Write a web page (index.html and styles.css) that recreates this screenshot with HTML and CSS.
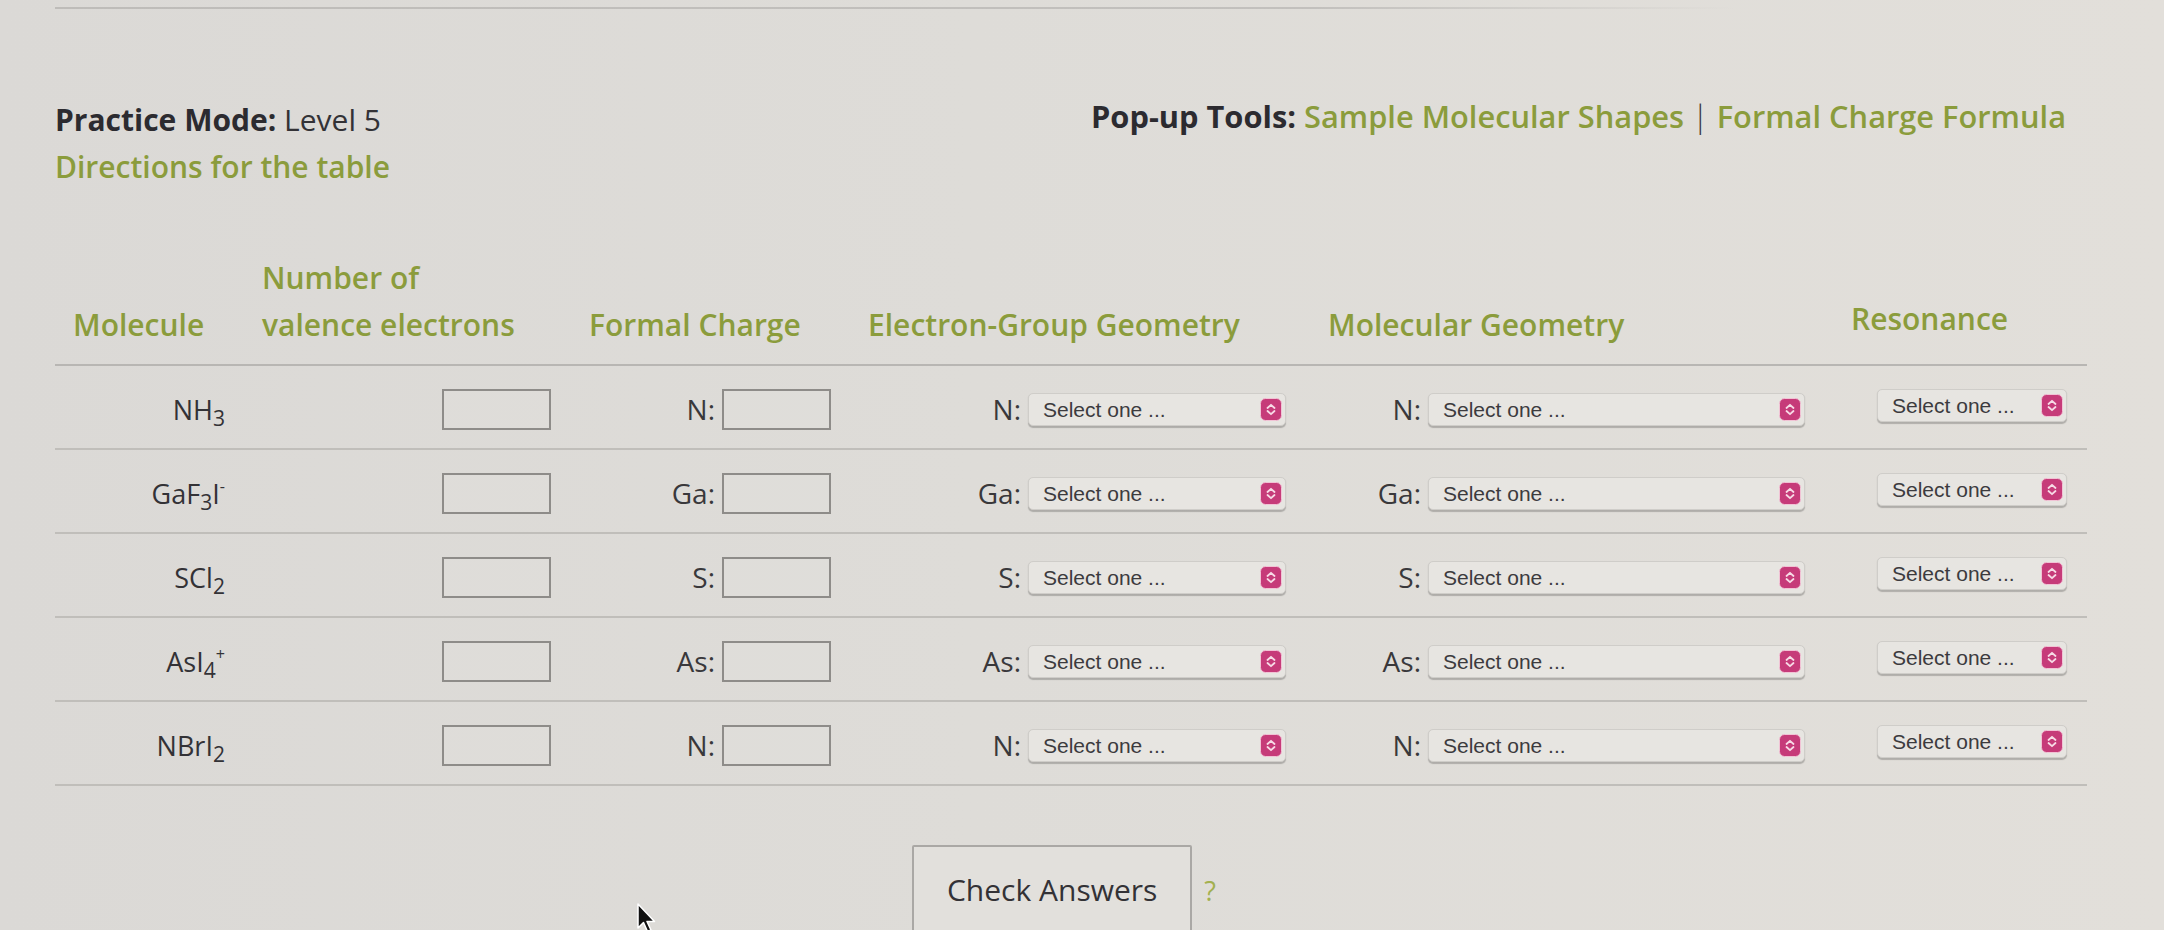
FILE: index.html
```html
<!DOCTYPE html>
<html lang="en">
<head>
<meta charset="utf-8">
<title>Practice Mode: Level 5</title>
<link rel="stylesheet" href="styles.css">
</head>
<body>
<div class="page">
  <div class="toprule"></div>

  <div class="intro">
    <div class="intro-left">
      <div class="mode"><b>Practice Mode:</b> Level 5</div>
      <a class="link strong">Directions for the table</a>
    </div>
    <div class="tools"><b>Pop-up Tools:</b> <a class="link">Sample Molecular Shapes</a> <span class="sep">|</span> <a class="link">Formal Charge Formula</a></div>
  </div>

  <div class="table">
    <div class="grid thead">
      <div class="th c1">Molecule</div>
      <div class="th c2">Number of<br>valence electrons</div>
      <div class="th c3">Formal Charge</div>
      <div class="th c4">Electron-Group Geometry</div>
      <div class="th c5">Molecular Geometry</div>
      <div class="th c6 up">Resonance</div>
    </div>

    <div class="grid row">
      <div class="td mol"><span>NH<sub>3</sub></span></div>
      <div class="td"><span class="box"></span></div>
      <div class="td"><span class="lbl">N:</span><span class="box"></span></div>
      <div class="td"><span class="lbl">N:</span><div class="select eg"><span>Select one ...</span><svg class="badge" viewBox="0 0 22 23"><rect x="0.5" y="0.5" width="21" height="22" rx="5" fill="#c63b79" stroke="#f1c3d5"/><path d="M7.5 10 L11 6.8 L14.5 10 M7.5 13 L11 16.2 L14.5 13" fill="none" stroke="#f7dbe6" stroke-width="1.8" stroke-linecap="round" stroke-linejoin="round"/></svg></div></div>
      <div class="td"><span class="lbl">N:</span><div class="select mg"><span>Select one ...</span><svg class="badge" viewBox="0 0 22 23"><rect x="0.5" y="0.5" width="21" height="22" rx="5" fill="#c63b79" stroke="#f1c3d5"/><path d="M7.5 10 L11 6.8 L14.5 10 M7.5 13 L11 16.2 L14.5 13" fill="none" stroke="#f7dbe6" stroke-width="1.8" stroke-linecap="round" stroke-linejoin="round"/></svg></div></div>
      <div class="td up"><div class="select rs"><span>Select one ...</span><svg class="badge" viewBox="0 0 22 23"><rect x="0.5" y="0.5" width="21" height="22" rx="5" fill="#c63b79" stroke="#f1c3d5"/><path d="M7.5 10 L11 6.8 L14.5 10 M7.5 13 L11 16.2 L14.5 13" fill="none" stroke="#f7dbe6" stroke-width="1.8" stroke-linecap="round" stroke-linejoin="round"/></svg></div></div>
    </div>

    <div class="grid row">
      <div class="td mol"><span>GaF<sub>3</sub>I<sup>-</sup></span></div>
      <div class="td"><span class="box"></span></div>
      <div class="td"><span class="lbl">Ga:</span><span class="box"></span></div>
      <div class="td"><span class="lbl">Ga:</span><div class="select eg"><span>Select one ...</span><svg class="badge" viewBox="0 0 22 23"><rect x="0.5" y="0.5" width="21" height="22" rx="5" fill="#c63b79" stroke="#f1c3d5"/><path d="M7.5 10 L11 6.8 L14.5 10 M7.5 13 L11 16.2 L14.5 13" fill="none" stroke="#f7dbe6" stroke-width="1.8" stroke-linecap="round" stroke-linejoin="round"/></svg></div></div>
      <div class="td"><span class="lbl">Ga:</span><div class="select mg"><span>Select one ...</span><svg class="badge" viewBox="0 0 22 23"><rect x="0.5" y="0.5" width="21" height="22" rx="5" fill="#c63b79" stroke="#f1c3d5"/><path d="M7.5 10 L11 6.8 L14.5 10 M7.5 13 L11 16.2 L14.5 13" fill="none" stroke="#f7dbe6" stroke-width="1.8" stroke-linecap="round" stroke-linejoin="round"/></svg></div></div>
      <div class="td up"><div class="select rs"><span>Select one ...</span><svg class="badge" viewBox="0 0 22 23"><rect x="0.5" y="0.5" width="21" height="22" rx="5" fill="#c63b79" stroke="#f1c3d5"/><path d="M7.5 10 L11 6.8 L14.5 10 M7.5 13 L11 16.2 L14.5 13" fill="none" stroke="#f7dbe6" stroke-width="1.8" stroke-linecap="round" stroke-linejoin="round"/></svg></div></div>
    </div>

    <div class="grid row">
      <div class="td mol"><span>SCl<sub>2</sub></span></div>
      <div class="td"><span class="box"></span></div>
      <div class="td"><span class="lbl">S:</span><span class="box"></span></div>
      <div class="td"><span class="lbl">S:</span><div class="select eg"><span>Select one ...</span><svg class="badge" viewBox="0 0 22 23"><rect x="0.5" y="0.5" width="21" height="22" rx="5" fill="#c63b79" stroke="#f1c3d5"/><path d="M7.5 10 L11 6.8 L14.5 10 M7.5 13 L11 16.2 L14.5 13" fill="none" stroke="#f7dbe6" stroke-width="1.8" stroke-linecap="round" stroke-linejoin="round"/></svg></div></div>
      <div class="td"><span class="lbl">S:</span><div class="select mg"><span>Select one ...</span><svg class="badge" viewBox="0 0 22 23"><rect x="0.5" y="0.5" width="21" height="22" rx="5" fill="#c63b79" stroke="#f1c3d5"/><path d="M7.5 10 L11 6.8 L14.5 10 M7.5 13 L11 16.2 L14.5 13" fill="none" stroke="#f7dbe6" stroke-width="1.8" stroke-linecap="round" stroke-linejoin="round"/></svg></div></div>
      <div class="td up"><div class="select rs"><span>Select one ...</span><svg class="badge" viewBox="0 0 22 23"><rect x="0.5" y="0.5" width="21" height="22" rx="5" fill="#c63b79" stroke="#f1c3d5"/><path d="M7.5 10 L11 6.8 L14.5 10 M7.5 13 L11 16.2 L14.5 13" fill="none" stroke="#f7dbe6" stroke-width="1.8" stroke-linecap="round" stroke-linejoin="round"/></svg></div></div>
    </div>

    <div class="grid row">
      <div class="td mol"><span>AsI<sub>4</sub><sup>+</sup></span></div>
      <div class="td"><span class="box"></span></div>
      <div class="td"><span class="lbl">As:</span><span class="box"></span></div>
      <div class="td"><span class="lbl">As:</span><div class="select eg"><span>Select one ...</span><svg class="badge" viewBox="0 0 22 23"><rect x="0.5" y="0.5" width="21" height="22" rx="5" fill="#c63b79" stroke="#f1c3d5"/><path d="M7.5 10 L11 6.8 L14.5 10 M7.5 13 L11 16.2 L14.5 13" fill="none" stroke="#f7dbe6" stroke-width="1.8" stroke-linecap="round" stroke-linejoin="round"/></svg></div></div>
      <div class="td"><span class="lbl">As:</span><div class="select mg"><span>Select one ...</span><svg class="badge" viewBox="0 0 22 23"><rect x="0.5" y="0.5" width="21" height="22" rx="5" fill="#c63b79" stroke="#f1c3d5"/><path d="M7.5 10 L11 6.8 L14.5 10 M7.5 13 L11 16.2 L14.5 13" fill="none" stroke="#f7dbe6" stroke-width="1.8" stroke-linecap="round" stroke-linejoin="round"/></svg></div></div>
      <div class="td up"><div class="select rs"><span>Select one ...</span><svg class="badge" viewBox="0 0 22 23"><rect x="0.5" y="0.5" width="21" height="22" rx="5" fill="#c63b79" stroke="#f1c3d5"/><path d="M7.5 10 L11 6.8 L14.5 10 M7.5 13 L11 16.2 L14.5 13" fill="none" stroke="#f7dbe6" stroke-width="1.8" stroke-linecap="round" stroke-linejoin="round"/></svg></div></div>
    </div>

    <div class="grid row">
      <div class="td mol"><span>NBrI<sub>2</sub></span></div>
      <div class="td"><span class="box"></span></div>
      <div class="td"><span class="lbl">N:</span><span class="box"></span></div>
      <div class="td"><span class="lbl">N:</span><div class="select eg"><span>Select one ...</span><svg class="badge" viewBox="0 0 22 23"><rect x="0.5" y="0.5" width="21" height="22" rx="5" fill="#c63b79" stroke="#f1c3d5"/><path d="M7.5 10 L11 6.8 L14.5 10 M7.5 13 L11 16.2 L14.5 13" fill="none" stroke="#f7dbe6" stroke-width="1.8" stroke-linecap="round" stroke-linejoin="round"/></svg></div></div>
      <div class="td"><span class="lbl">N:</span><div class="select mg"><span>Select one ...</span><svg class="badge" viewBox="0 0 22 23"><rect x="0.5" y="0.5" width="21" height="22" rx="5" fill="#c63b79" stroke="#f1c3d5"/><path d="M7.5 10 L11 6.8 L14.5 10 M7.5 13 L11 16.2 L14.5 13" fill="none" stroke="#f7dbe6" stroke-width="1.8" stroke-linecap="round" stroke-linejoin="round"/></svg></div></div>
      <div class="td up"><div class="select rs"><span>Select one ...</span><svg class="badge" viewBox="0 0 22 23"><rect x="0.5" y="0.5" width="21" height="22" rx="5" fill="#c63b79" stroke="#f1c3d5"/><path d="M7.5 10 L11 6.8 L14.5 10 M7.5 13 L11 16.2 L14.5 13" fill="none" stroke="#f7dbe6" stroke-width="1.8" stroke-linecap="round" stroke-linejoin="round"/></svg></div></div>
    </div>
  </div>

  <div class="actions">
    <button class="check">Check Answers</button>
    <span class="help">?</span>
  </div>

  <svg class="cursor" viewBox="0 0 20 30"><path d="M2 1 L2 25 L7.5 19.5 L11.5 28.5 L15 27 L11 18.5 L18.5 18.5 Z" fill="#111" stroke="#fff" stroke-width="1.5" stroke-linejoin="round"/></svg>
</div>
</body>
</html>
```

FILE: styles.css
```css
html, body {
  margin: 0;
  padding: 0;
  overflow: hidden;
}

body {
  background: linear-gradient(90deg, #dbd9d6 0%, #dedcd8 45%, #e2dfda 100%);
  font-family: "Open Sans", "Noto Sans", sans-serif;
  color: #2f2e32;
  height: 930px;
}

.page {
  position: relative;
  padding: 7px 77px 0 55px;
}

.toprule {
  height: 2px;
  width: 1680px;
  background: linear-gradient(90deg, #bebcb9 0%, #c2c0bd 75%, rgba(200,198,195,0) 100%);
}

.intro {
  display: flex;
  justify-content: space-between;
  align-items: flex-start;
  margin-top: 87px;
  padding-right: 21px;
  font-size: 30px;
  line-height: 47px;
}

.intro-left {
  display: flex;
  flex-direction: column;
}

.mode b, .tools b {
  font-weight: 700;
  color: #2c2b30;
}

.mode {
  color: #333236;
}

.link {
  color: #8b9c3c;
  text-decoration: none;
}

.link.strong {
  font-weight: 600;
}

.tools {
  margin-top: -3px;
  font-size: 30.8px;
}

.tools .link {
  font-weight: 600;
}

.sep {
  color: #3a393c;
  font-weight: 300;
}

.table {
  margin-top: 64px;
}

.grid {
  display: grid;
  grid-template-columns: 195px 320px 280px 455px 519px 263px;
}

.thead {
  align-items: end;
  border-bottom: 2px solid #b8b6b3;
  padding-bottom: 16px;
}

.th {
  color: #8b9c3c;
  font-weight: 600;
  font-size: 30px;
  line-height: 47px;
}

.th.c1 { padding-left: 18px; }
.th.c2 { padding-left: 12px; }
.th.c3 { padding-left: 19px; }
.th.c4 { padding-left: 18px; }
.th.c5 { padding-left: 23px; }
.th.c6 { padding-left: 27px; }
.th.up { position: relative; top: -6px; }

.row {
  height: 78px;
  padding-top: 4px;
  border-bottom: 2px solid #c0beba;
  align-items: center;
}

.td {
  display: flex;
  justify-content: flex-end;
  align-items: center;
  padding-right: 19px;
}

.td.up { padding-right: 20px; }

.mol {
  padding-right: 25px;
  font-size: 27px;
  color: #333236;
}

.mol sub {
  font-size: 0.78em;
  vertical-align: -0.3em;
  line-height: 0;
}

.mol sup {
  font-size: 0.6em;
  vertical-align: 0.75em;
  line-height: 0;
}

.lbl {
  font-size: 28px;
  color: #39383b;
  margin-right: 7px;
}

.box {
  display: block;
  width: 109px;
  height: 41px;
  box-sizing: border-box;
  border: 2px solid #8e8c89;
  background: rgba(255,255,255,0.06);
}

.select {
  display: flex;
  align-items: center;
  justify-content: space-between;
  height: 33px;
  box-sizing: border-box;
  padding: 1px 3px 0 14px;
  border: 1px solid #cfcdc9;
  border-radius: 5px;
  background: #e7e5e1;
  box-shadow: 0 1.5px 1px rgba(0,0,0,0.22);
  font-family: "Liberation Sans", Arial, sans-serif;
  font-size: 21px;
  color: #3c3b3e;
}

.select.eg { width: 258px; }
.select.mg { width: 377px; }
.select.rs { width: 190px; position: relative; top: -4px; }

.badge {
  width: 22px;
  height: 23px;
  flex: none;
}

.actions {
  display: flex;
  justify-content: center;
  align-items: center;
  margin-top: 59px;
  padding-right: 14px;
}

.check {
  width: 280px;
  height: 110px;
  box-sizing: border-box;
  padding: 22px 0 26px;
  border: 2px solid #aaa8a5;
  border-radius: 2px;
  background: #e2e0dc;
  font-family: "Open Sans", "Noto Sans", sans-serif;
  font-size: 30px;
  color: #333236;
  align-self: flex-start;
  display: flex;
  justify-content: center;
  align-items: flex-start;
}

.help {
  margin-left: 12px;
  font-size: 27px;
  color: #a3b04f;
  align-self: flex-start;
  margin-top: 27px;
}

.cursor {
  position: absolute;
  left: 636px;
  top: 903px;
  width: 20px;
  height: 30px;
}
```
